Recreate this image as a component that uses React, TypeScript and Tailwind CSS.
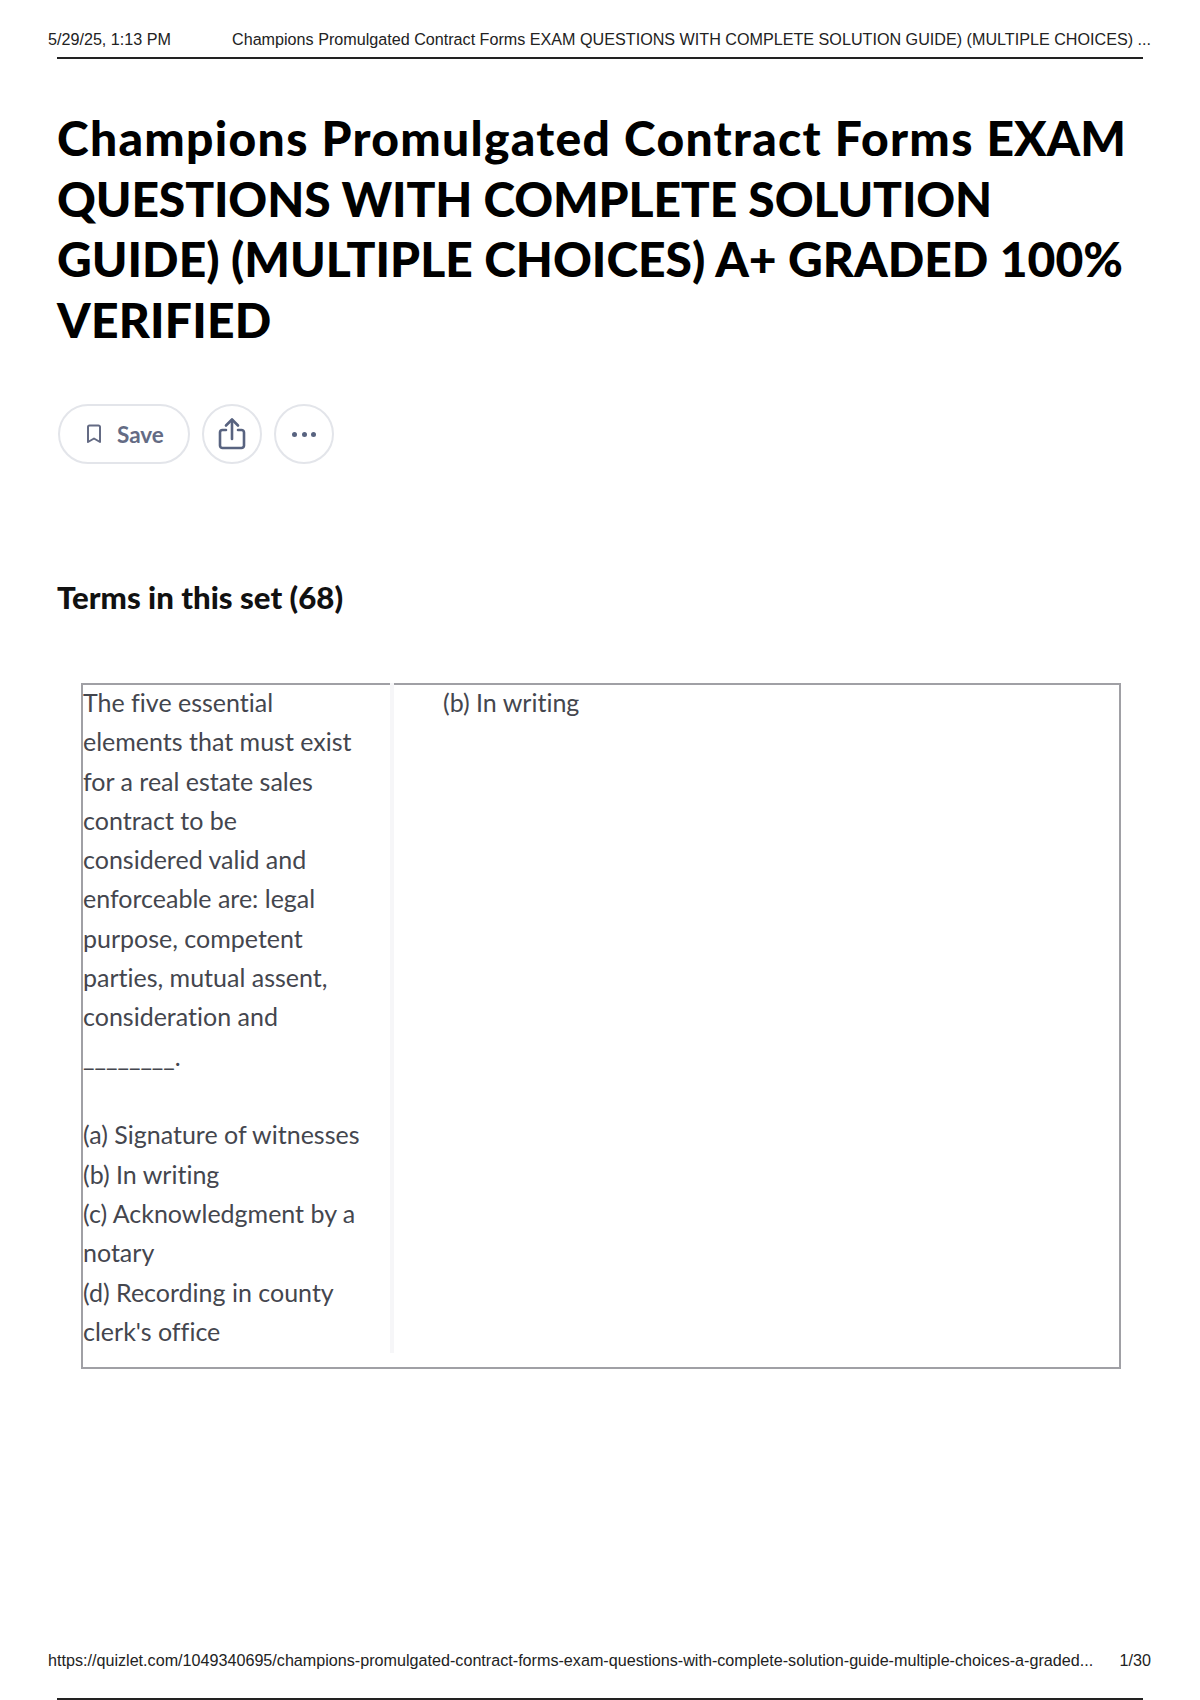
const questionLines = [
  "The five essential",
  "elements that must exist",
  "for a real estate sales",
  "contract to be",
  "considered valid and",
  "enforceable are: legal",
  "purpose, competent",
  "parties, mutual assent,",
  "consideration and",
  "________.",
  "",
  "(a) Signature of witnesses",
  "(b) In writing",
  "(c) Acknowledgment by a",
  "notary",
  "(d) Recording in county",
  "clerk's office",
];

const App = () => {
  return (
    <div className="w-[1200px] h-[1700px] bg-white flex flex-col overflow-hidden font-['Lato',sans-serif] [font-variant-ligatures:none]">
      <div className="flex justify-between pl-[48px] pr-[49px] pt-[30px] h-[57px] text-[16.15px] leading-[18px] text-[#222] font-['Liberation_Sans',sans-serif]">
        <span>5/29/25, 1:13 PM</span>
        <span>
          Champions Promulgated Contract Forms EXAM QUESTIONS WITH COMPLETE SOLUTION GUIDE) (MULTIPLE CHOICES) ...
        </span>
      </div>
      <div className="mx-[57px] h-[2px] bg-[#222]"></div>

      <div className="pl-[57px] pt-[49px]">
        <h1 className="text-[48px] leading-[60.5px] font-black text-black whitespace-nowrap">
          <div>
            <span className="tracking-[1.3px]">Champions Promulgated Contract Forms </span>EXAM
          </div>
          <div className="tracking-[-0.15px]">QUESTIONS WITH COMPLETE SOLUTION</div>
          <div>GUIDE) (MULTIPLE CHOICES) A+ GRADED 100%</div>
          <div className="tracking-[0.2px]">VERIFIED</div>
        </h1>
      </div>

      <div className="flex items-center gap-[12px] pl-[58px] mt-[54px]">
        <div className="w-[132px] h-[60px] rounded-full border-[2.5px] border-[#e3e5ea] flex items-center pl-[26px] gap-[15px] text-[#646b84]">
          <svg width="16" height="20" viewBox="0 0 16 20" fill="none" stroke="currentColor" strokeWidth="2" strokeLinejoin="round">
            <path d="M2 3a1.500 1.500 0 0 1 1.500-1.500h9A1.500 1.500 0 0 1 14 3v15l-6-3.500L2 18z" />
          </svg>
          <span className="text-[22.5px] font-bold pt-[2px]">Save</span>
        </div>
        <div className="w-[60px] h-[60px] rounded-full border-[2.5px] border-[#e3e5ea] flex items-center justify-center">
          <svg width="28" height="34" viewBox="0 0 28 34" fill="none" stroke="#586380" strokeWidth="2.6" strokeLinecap="round" strokeLinejoin="round">
            <path d="M8 13H4.500A2.500 2.500 0 0 0 2 15.500v13A2.500 2.500 0 0 0 4.500 31h19a2.500 2.500 0 0 0 2.500-2.500v-13A2.500 2.500 0 0 0 23.500 13H20" />
            <path d="M14 22V3" />
            <path d="M8 8.500 14 2.500 20 8.500" />
          </svg>
        </div>
        <div className="w-[60px] h-[60px] rounded-full border-[2.5px] border-[#e3e5ea] flex items-center justify-center gap-[4.500px]">
          <span className="w-[5px] h-[5px] rounded-full bg-[#586380]"></span>
          <span className="w-[5px] h-[5px] rounded-full bg-[#586380]"></span>
          <span className="w-[5px] h-[5px] rounded-full bg-[#586380]"></span>
        </div>
      </div>

      <div className="pl-[57px] mt-[115px] text-[31.2px] leading-[36px] font-black text-[#111]">
        Terms in this set (68)
      </div>

      <div className="ml-[81px] mr-[79px] mt-[68px] h-[686px] border-[2px] border-[#a0a0a5] flex text-[25px] leading-[39.3px] text-[#44464e]">
        <div className="w-[307px] -mt-[2px] whitespace-pre">
          {questionLines.map((line, index) => (
            <div key={index} className={line === "" ? "h-[39.500px]" : ""}>
              {line}
            </div>
          ))}
        </div>
        <div className="w-[4px] -mt-[2px] mb-[14px] bg-[#f6f6f8]"></div>
        <div className="pl-[49px] -mt-[2px]">(b) In writing</div>
      </div>

      <div className="mt-auto flex justify-between pl-[48px] pr-[49px] text-[16.15px] leading-[18px] text-[#222] font-['Liberation_Sans',sans-serif]">
        <span>
          https://quizlet.com/1049340695/champions-promulgated-contract-forms-exam-questions-with-complete-solution-guide-multiple-choices-a-graded...
        </span>
        <span>1/30</span>
      </div>
      <div className="mx-[57px] mt-[29px] h-[2px] bg-[#222]"></div>
    </div>
  );
};

export default App;
